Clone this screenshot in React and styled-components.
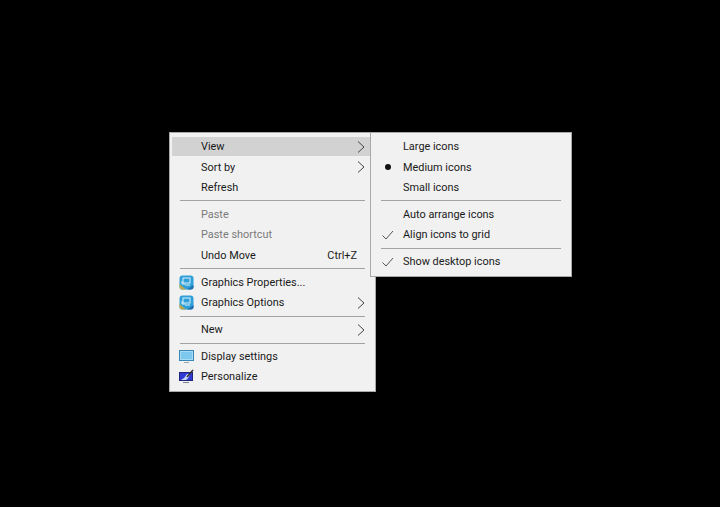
import React from 'react';
import styled, { createGlobalStyle } from 'styled-components';

const GlobalStyle = createGlobalStyle`
  html, body {
    margin: 0;
    padding: 0;
    background: #000;
  }
`;

const Desktop = styled.div`
  position: relative;
  width: 720px;
  height: 507px;
  background: #000;
  overflow: hidden;
  font-family: Roboto, "Open Sans", sans-serif;
  font-size: 10.9px;
  color: #1a1a1a;
`;

const Menu = styled.div`
  position: absolute;
  left: ${(p) => p.$left}px;
  top: 132px;
  width: ${(p) => p.$width}px;
  box-sizing: border-box;
  padding: 3.5px 2px 3.5px;
  background: #f1f1f1;
  border: 1px solid #a8a8a8;
`;

const Row = styled.div`
  display: flex;
  align-items: center;
  height: 20.4px;
  padding-left: ${(p) => p.$indent}px;
  color: ${(p) => (p.$disabled ? '#7a7a7a' : 'inherit')};
  white-space: nowrap;
  position: relative;

  ${(p) => p.$active && `
    &::before {
      content: '';
      position: absolute;
      inset: 0 0 1px 0;
      background: #d2d2d2;
    }
  `}
`;

const Gutter = styled.span`
  position: absolute;
  left: ${(p) => p.$left}px;
  top: 2px;
  width: 16px;
  height: 16px;
  display: flex;
  align-items: center;
  justify-content: center;
`;

const Label = styled.span`
  flex: 1;
  position: relative;
`;

const Shortcut = styled.span`
  margin-right: 16px;
`;

const Arrow = styled.svg`
  width: 8px;
  height: 12px;
  margin-right: 8px;
  flex: none;
  position: relative;
`;

const Separator = styled.div`
  height: 1px;
  margin: 2.8px ${(p) => p.$right}px 2.8px ${(p) => p.$left}px;
  background: #a3a3a3;
`;

const ChevronRight = () => (
  <Arrow viewBox="0 0 8 12">
    <path d="M1 0.5 L7 6 L1 11.5" fill="none" stroke="#444" strokeWidth="1" />
  </Arrow>
);

const Check = () => (
  <svg width="14" height="12" viewBox="0 0 14 12">
    <path d="M1.5 6.5 L5 10 L12 2" fill="none" stroke="#555" strokeWidth="1" />
  </svg>
);

const Dot = () => (
  <svg width="8" height="8" viewBox="0 0 8 8">
    <circle cx="4" cy="4" r="3" fill="#111" />
  </svg>
);

const GraphicsIcon = () => (
  <svg width="15" height="15" viewBox="0 0 15 15">
    <rect x="0.5" y="0.5" width="14" height="14" rx="3" fill="#2e9fd8" />
    <path d="M0.5 9 L0.5 12 Q0.5 14.5 3 14.5 L7 14.5 Z" fill="#b9a94f" />
    <path d="M8 14.5 L12 14.5 Q14.5 14.5 14.5 12 L14.5 10 Z" fill="#1f6fb0" />
    <rect x="4" y="3" width="7" height="5" fill="none" stroke="#d9f1fb" strokeWidth="1" />
    <path d="M6 10 H11 M3 6 V9 H6" fill="none" stroke="#d9f1fb" strokeWidth="1" />
  </svg>
);

const DisplayIcon = () => (
  <svg width="15" height="15" viewBox="0 0 15 15">
    <rect x="0.5" y="1.5" width="14" height="10" fill="#a5dcf5" stroke="#3a86b5" />
    <rect x="2" y="3" width="11" height="7" fill="#7cc8ee" />
    <path d="M5 13.5 H10" stroke="#9aa8b2" strokeWidth="1" />
  </svg>
);

const PersonalizeIcon = () => (
  <svg width="15" height="15" viewBox="0 0 15 15">
    <rect x="0.5" y="3.5" width="13" height="8" fill="#2f3ad6" stroke="#20247a" />
    <path d="M2 11 Q6 9 8 5 L11 5 Q10 9 7 11 Z" fill="#c6d8f8" />
    <path d="M8 8 L14 1" stroke="#333" strokeWidth="1.6" />
    <path d="M4 13.5 H10" stroke="#7d8792" strokeWidth="1" />
  </svg>
);

const mainItems = [
  { label: 'View', arrow: true, active: true },
  { label: 'Sort by', arrow: true },
  { label: 'Refresh' },
  { separator: true },
  { label: 'Paste', disabled: true },
  { label: 'Paste shortcut', disabled: true },
  { label: 'Undo Move', shortcut: 'Ctrl+Z' },
  { separator: true },
  { label: 'Graphics Properties...', icon: <GraphicsIcon /> },
  { label: 'Graphics Options', icon: <GraphicsIcon />, arrow: true },
  { separator: true },
  { label: 'New', arrow: true },
  { separator: true },
  { label: 'Display settings', icon: <DisplayIcon /> },
  { label: 'Personalize', icon: <PersonalizeIcon /> },
];

const viewItems = [
  { label: 'Large icons' },
  { label: 'Medium icons', icon: <Dot /> },
  { label: 'Small icons' },
  { separator: true },
  { label: 'Auto arrange icons' },
  { label: 'Align icons to grid', icon: <Check /> },
  { separator: true },
  { label: 'Show desktop icons', icon: <Check /> },
];

const MenuList = ({ items, indent, gutter, sepLeft, sepRight }) =>
  items.map((item, i) =>
    item.separator ? (
      <Separator key={i} $left={sepLeft} $right={sepRight} />
    ) : (
      <Row key={i} $indent={indent} $active={item.active} $disabled={item.disabled}>
        {item.icon && <Gutter $left={gutter}>{item.icon}</Gutter>}
        <Label>{item.label}</Label>
        {item.shortcut && <Shortcut>{item.shortcut}</Shortcut>}
        {item.arrow && <ChevronRight />}
      </Row>
    )
  );

const App = () => (
  <Desktop>
    <GlobalStyle />
    <Menu $left={169} $width={207}>
      <MenuList items={mainItems} indent={29} gutter={6} sepLeft={8} sepRight={8} />
    </Menu>
    <Menu $left={370} $width={202}>
      <MenuList items={viewItems} indent={30} gutter={7} sepLeft={8} sepRight={8} />
    </Menu>
  </Desktop>
);

export default App;
